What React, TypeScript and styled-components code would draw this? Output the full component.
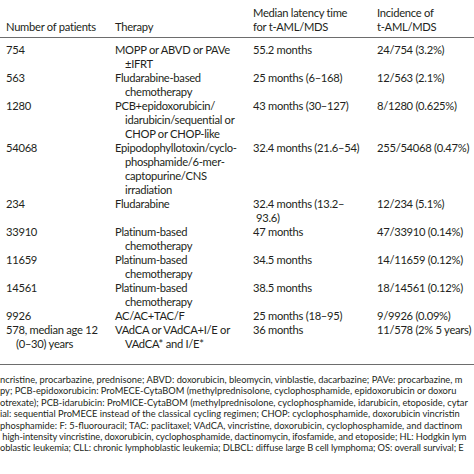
import styled, { createGlobalStyle } from "styled-components";

const GlobalStyle = createGlobalStyle`
  html, body {
    margin: 0;
    padding: 0;
    background: #ffffff;
  }
  body {
    width: 474px;
    height: 474px;
    overflow: hidden;
    font-family: "Lato", "Open Sans", sans-serif;
    color: #231f20;
  }
`;

const Page = styled.div`
  width: 474px;
  height: 474px;
  overflow: hidden;
  display: flex;
  flex-direction: column;
`;

const Grid = styled.div`
  display: grid;
  grid-template-columns: 109px 138px 124px 1fr;
  padding-left: 6px;
  font-size: 11.2px;
  letter-spacing: -0.28px;
  line-height: 14px;
`;

const RowGroup = styled.div`
  display: contents;
`;

const HeadCell = styled.div<{ first?: boolean }>`
  padding: 6px 0 3px;
  align-self: end;
  white-space: nowrap;
  border-bottom: 1px solid #6d6d6d;
  margin-left: ${(p) => (p.first ? "-6px" : "0")};
  padding-left: ${(p) => (p.first ? "6px" : "0")};
`;

const Cell = styled.div<{ hang?: number; first?: boolean; last?: boolean }>`
  white-space: nowrap;
  padding-left: ${(p) => p.hang ?? 10}px;
  text-indent: -${(p) => p.hang ?? 10}px;
  padding-top: ${(p) => (p.first ? 5 : 0)}px;
  padding-bottom: ${(p) => (p.last ? 13 : 0)}px;
`;

const Rule = styled.div`
  height: 0;
  border-top: 1px solid #6d6d6d;
`;

const Notes = styled.div`
  padding-top: 9px;
  font-size: 9.3px;
  line-height: 11.4px;
  overflow: hidden;
`;

const NoteLine = styled.div<{ tight?: boolean }>`
  white-space: nowrap;
  letter-spacing: ${(p) => (p.tight ? "-0.08px" : "0")};
`;

type Row = { n: string[]; t: string[]; m: string[]; i: string[]; mHang?: number };

const rows: Row[] = [
  { n: ["754"], t: ["MOPP or ABVD or PAVe", "\u00b1IFRT"], m: ["55.2 months"], i: ["24/754 (3.2%)"] },
  { n: ["563"], t: ["Fludarabine-based", "chemotherapy"], m: ["25 months (6\u2013168)"], i: ["12/563 (2.1%)"] },
  {
    n: ["1280"],
    t: ["PCB+epidoxorubicin/", "idarubicin/sequential or", "CHOP or CHOP-like"],
    m: ["43 months (30\u2013127)"],
    i: ["8/1280 (0.625%)"],
  },
  {
    n: ["54068"],
    t: ["Epipodophyllotoxin/cyclo-", "phosphamide/6-mer-", "captopurine/CNS", "irradiation"],
    m: ["32.4 months (21.6\u201354)"],
    i: ["255/54068 (0.47%)"],
  },
  { n: ["234"], t: ["Fludarabine"], m: ["32.4 months (13.2\u2013", "93.6)"], i: ["12/234 (5.1%)"], mHang: 3 },
  { n: ["33910"], t: ["Platinum-based", "chemotherapy"], m: ["47 months"], i: ["47/33910 (0.14%)"] },
  { n: ["11659"], t: ["Platinum-based", "chemotherapy"], m: ["34.5 months"], i: ["14/11659 (0.12%)"] },
  { n: ["14561"], t: ["Platinum-based", "chemotherapy"], m: ["38.5 months"], i: ["18/14561 (0.12%)"] },
  { n: ["9926"], t: ["AC/AC+TAC/F"], m: ["25 months (18\u201395)"], i: ["9/9926 (0.09%)"] },
  {
    n: ["578, median age 12", "(0\u201330) years"],
    t: ["VAdCA or VAdCA+I/E or", "VAdCA* and I/E*"],
    m: ["36 months"],
    i: ["11/578 (2% 5 years)"],
  },
];

// footnote lines as they show through the crop of the original figure
const notes = [
  "ncristine, procarbazine, prednisone; ABVD: doxorubicin, bleomycin, vinblastie, dacarbazine; PAVe: procarbazine, m",
  "py; PCB-epidoxorubicin: ProMECE-CytaBOM (methylprednisolone, cyclophosphamide, epidoxorubicin or doxoru",
  "otrexate); PCB-idarubicin: ProMICE-CytaBOM (methylprednisolone, cyclophosphamide, idarubicin, etoposide, cytar",
  "ial: sequential ProMECE instead of the classical cycling regimen; CHOP: cyclophosphamide, doxorubicin vincristin",
  "phosphamide: F: 5-fluorouracil; TAC: paclitaxel; VAdCA, vincristine, doxorubicin, cyclophosphamide, and dactinom",
  "\u00a0high-intensity vincristine, doxorubicin, cyclophosphamide, dactinomycin, ifosfamide, and etoposide; HL: Hodgkin lym",
  "oblastic leukemia; CLL: chronic lymphoblastic leukemia; DLBCL: diffuse large B cell lymphoma; OS: overall survival; E",
];

const lines = (l: string[]) =>
  l.map((s, k) => (
    <span key={k}>
      {k > 0 && <br />}
      {s}
    </span>
  ));

export default function App() {
  return (
    <Page>
      <GlobalStyle />
      <Grid>
        <RowGroup>
          <HeadCell first>Number of patients</HeadCell>
          <HeadCell>Therapy</HeadCell>
          <HeadCell>
            Median latency time
            <br />
            for t-AML/MDS
          </HeadCell>
          <HeadCell>
            Incidence of
            <br />
            t-AML/MDS
          </HeadCell>
        </RowGroup>
        {rows.map((r, idx) => {
          const first = idx === 0;
          const last = idx === rows.length - 1;
          return (
            <RowGroup key={idx}>
              <Cell first={first} last={last}>{lines(r.n)}</Cell>
              <Cell first={first} last={last}>{lines(r.t)}</Cell>
              <Cell first={first} last={last} hang={r.mHang}>{lines(r.m)}</Cell>
              <Cell first={first} last={last}>{lines(r.i)}</Cell>
            </RowGroup>
          );
        })}
      </Grid>
      <Rule />
      <Notes>
        {notes.map((n, k) => (
          <NoteLine key={k} tight={n.length > 115}>{n}</NoteLine>
        ))}
      </Notes>
    </Page>
  );
}
